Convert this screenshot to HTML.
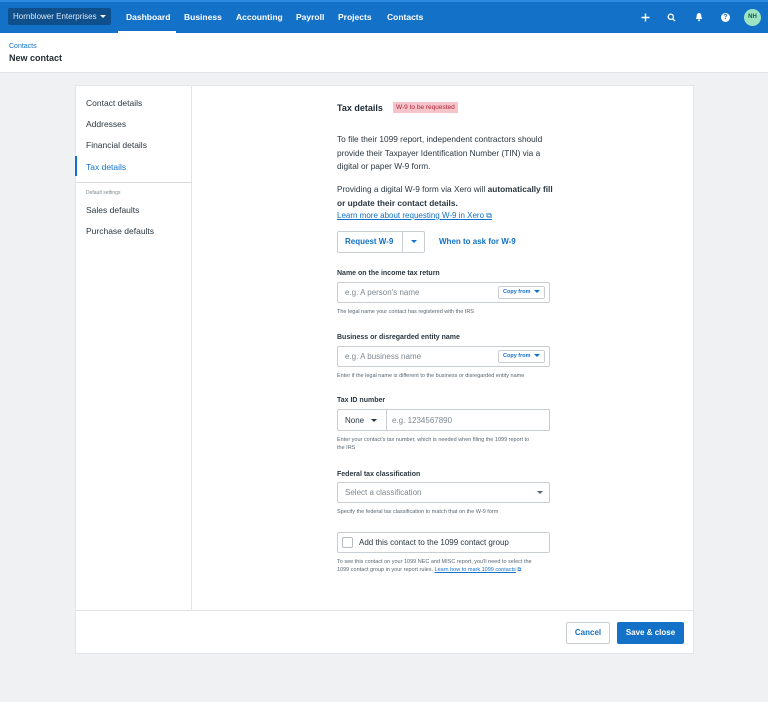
<!DOCTYPE html>
<html><head><meta charset="utf-8"><style>
*{box-sizing:border-box;margin:0;padding:0}
body{width:768px;height:702px;background:#f0f1f3;font-family:"Liberation Sans",Arial,sans-serif;position:relative;overflow:hidden;color:#1e2a33}
.a{position:absolute;white-space:nowrap}
.nav{position:absolute;left:0;top:0;width:768px;height:33px;background:#1371c7;border-top:2px solid #2d8ae0}
.nv{color:#fff;font-size:8.5px;font-weight:bold;top:12px}
.hdr{position:absolute;left:0;top:33px;width:768px;height:40px;background:#fff;border-bottom:1px solid #e1e3e6}
.card{position:absolute;left:75px;top:85px;width:619px;height:569px;background:#fff;border:1px solid #e3e5e8}
.side{font-size:8.5px;color:#2b3740}
.lbl{font-size:7px;font-weight:bold;color:#2b3740}
.help{font-size:5.5px;color:#596670}
.inp{position:absolute;border:1px solid #c9ced3;border-radius:2px;background:#fff}
.ph{font-size:8px;color:#7d8890}
.p{font-size:8.3px;color:#2b3740;line-height:13.5px;white-space:normal}
.cf{position:absolute;border:1px solid #c9ced3;border-radius:2px;font-size:5.5px;color:#1371c7;font-weight:bold;height:13px;line-height:11px;padding:0 4px}
.tri{display:inline-block;width:0;height:0;border-left:3px solid transparent;border-right:3px solid transparent;border-top:3.5px solid currentColor;vertical-align:middle;margin-left:3px}
</style></head><body>
<div class="nav">
 <div class="a" style="left:8px;top:6px;width:103px;height:17px;background:#0e4f8c;border-radius:2px;color:#dbe7f3;font-size:8px;padding:4px 0 0 5px">Hornblower Enterprises <span class="tri" style="color:#fff;margin-left:1px"></span></div>
 <div class="a nv" style="left:126px;top:10px">Dashboard</div>
 <div class="a" style="left:118px;top:29px;width:58px;height:2px;background:#fff"></div>
 <div class="a nv" style="left:184px;top:10px">Business</div>
 <div class="a nv" style="left:236px;top:10px">Accounting</div>
 <div class="a nv" style="left:296px;top:10px">Payroll</div>
 <div class="a nv" style="left:338px;top:10px">Projects</div>
 <div class="a nv" style="left:387px;top:10px">Contacts</div>
 <svg class="a" style="left:641px;top:11px" width="9" height="9"><path d="M4.5 0.5V8.5M0.5 4.5H8.5" stroke="#fff" stroke-width="1.4"/></svg>
 <svg class="a" style="left:667px;top:11px" width="9" height="9"><circle cx="3.8" cy="3.8" r="2.6" fill="none" stroke="#fff" stroke-width="1.3"/><line x1="5.7" y1="5.7" x2="8" y2="8" stroke="#fff" stroke-width="1.3"/></svg>
 <svg class="a" style="left:695px;top:10px" width="8" height="10"><path d="M4 1C2 1 1.6 3 1.6 5L0.8 7H7.2L6.4 5C6.4 3 6 1 4 1Z" fill="#fff"/><circle cx="4" cy="8.3" r="1" fill="#fff"/></svg>
 <div class="a" style="left:721px;top:11px;width:9px;height:9px;border-radius:50%;background:#fff;color:#1371c7;font-size:7px;font-weight:bold;text-align:center;line-height:9px">?</div>
 <div class="a" style="left:744px;top:7px;width:17px;height:17px;border-radius:50%;background:#9ee3c4;color:#0d5a46;font-size:6px;font-weight:bold;text-align:center;line-height:17px">NH</div>
</div>
<div class="hdr">
 <div class="a" style="left:9px;top:10px;font-size:7px;color:#1371c7">Contacts</div>
 <div class="a" style="left:9px;top:20px;font-size:9px;font-weight:bold;color:#1e2a33">New contact</div>
</div>
<div class="card">
 <div class="a" style="left:115px;top:0;width:1px;height:524px;background:#e1e3e6"></div>
 <div class="a" style="left:0;top:524px;width:617px;height:1px;background:#e1e3e6"></div>
 <div class="a side" style="left:10px;top:12px">Contact details</div>
 <div class="a side" style="left:10px;top:33px">Addresses</div>
 <div class="a side" style="left:10px;top:54px">Financial details</div>
 <div class="a side" style="left:10px;top:76px;color:#1371c7">Tax details</div>
 <div class="a" style="left:-1px;top:70px;width:2px;height:20px;background:#1371c7"></div>
 <div class="a" style="left:0;top:96px;width:116px;height:1px;background:#d8dbde"></div>
 <div class="a" style="left:10px;top:104px;font-size:5px;color:#7d8890">Default settings</div>
 <div class="a side" style="left:10px;top:119px">Sales defaults</div>
 <div class="a side" style="left:10px;top:140px">Purchase defaults</div>

 <div class="a" style="left:261px;top:17px;font-size:9px;font-weight:bold">Tax details</div>
 <div class="a" style="left:317px;top:16px;background:#f5c4c9;color:#b0243a;font-size:6.5px;padding:2px 3px">W-9 to be requested</div>
 <div class="a p" style="left:261px;top:47px;width:222px">To file their 1099 report, independent contractors should provide their Taxpayer Identification Number (TIN) via a digital or paper W-9 form.</div>
 <div class="a p" style="left:261px;top:97px;width:222px">Providing a digital W-9 form via Xero will <b>automatically fill or update their contact details.</b></div>
 <div class="a" style="left:261px;top:125px;font-size:8px;color:#1371c7;text-decoration:underline">Learn more about requesting W-9 in Xero ⧉</div>
 <div class="a" style="left:261px;top:145px;width:88px;height:22px;border:1px solid #c9ced3;border-radius:2px"></div>
 <div class="a" style="left:326px;top:145px;width:1px;height:22px;background:#c9ced3"></div>
 <div class="a" style="left:269px;top:151px;font-size:8px;font-weight:bold;color:#1371c7">Request W-9</div>
 <div class="a" style="left:332px;top:151px;color:#1371c7;font-size:8px"><span class="tri"></span></div>
 <div class="a" style="left:363px;top:151px;font-size:8px;font-weight:bold;color:#1371c7">When to ask for W-9</div>

 <div class="a lbl" style="left:261px;top:184px">Name on the income tax return</div>
 <div class="inp" style="left:261px;top:196px;width:213px;height:21px"></div>
 <div class="a ph" style="left:269px;top:202px">e.g. A person's name</div>
 <div class="cf" style="left:422px;top:200px">Copy from<span class="tri"></span></div>
 <div class="a help" style="left:261px;top:223px">The legal name your contact has registered with the IRS</div>

 <div class="a lbl" style="left:261px;top:248px">Business or disregarded entity name</div>
 <div class="inp" style="left:261px;top:260px;width:213px;height:21px"></div>
 <div class="a ph" style="left:269px;top:266px">e.g. A business name</div>
 <div class="cf" style="left:422px;top:264px">Copy from<span class="tri"></span></div>
 <div class="a help" style="left:261px;top:287px">Enter if the legal name is different to the business or disregarded entity name</div>

 <div class="a lbl" style="left:261px;top:311px">Tax ID number</div>
 <div class="inp" style="left:261px;top:323px;width:213px;height:22px"></div>
 <div class="a" style="left:310px;top:323px;width:1px;height:22px;background:#c9ced3"></div>
 <div class="a" style="left:269px;top:330px;font-size:8px;color:#2b3740">None <span class="tri" style="margin-left:5px"></span></div>
 <div class="a ph" style="left:316px;top:330px">e.g. 1234567890</div>
 <div class="a help" style="left:261px;top:351px">Enter your contact's tax number, which is needed when filing the 1099 report to</div>
 <div class="a help" style="left:261px;top:359px">the IRS</div>

 <div class="a lbl" style="left:261px;top:385px">Federal tax classification</div>
 <div class="inp" style="left:261px;top:396px;width:213px;height:21px"></div>
 <div class="a ph" style="left:269px;top:402px">Select a classification</div>
 <div class="a" style="left:458px;top:402px;font-size:8px;color:#596670"><span class="tri"></span></div>
 <div class="a help" style="left:261px;top:423px">Specify the federal tax classification to match that on the W-9 form</div>

 <div class="inp" style="left:261px;top:446px;width:213px;height:21px"></div>
 <div class="a" style="left:266px;top:451px;width:11px;height:11px;border:1px solid #b5bcc2;border-radius:2px"></div>
 <div class="a" style="left:283px;top:452px;font-size:8px;color:#2b3740">Add this contact to the 1099 contact group</div>
 <div class="a help" style="left:261px;top:473px">To see this contact on your 1099 NEC and MISC report, you'll need to select the</div>
 <div class="a help" style="left:261px;top:481px">1099 contact group in your report rules. <span style="color:#1371c7;text-decoration:underline">Learn how to mark 1099 contacts</span> <span style="color:#1371c7">⧉</span></div>

 <div class="a" style="left:490px;top:536px;width:44px;height:22px;border:1px solid #c9ced3;border-radius:2px;font-size:8px;font-weight:bold;color:#1371c7;text-align:center;line-height:20px">Cancel</div>
 <div class="a" style="left:541px;top:536px;width:67px;height:22px;background:#1371c7;border-radius:2px;font-size:8px;font-weight:bold;color:#fff;text-align:center;line-height:22px">Save &amp; close</div>
</div>
</body></html>
